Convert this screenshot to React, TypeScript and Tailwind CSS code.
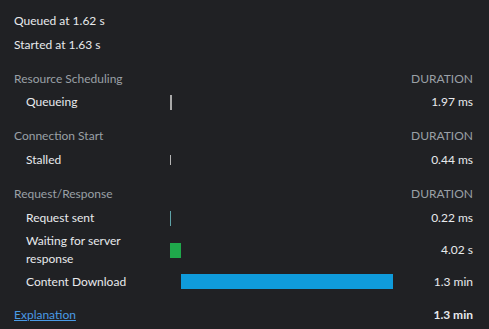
type Phase = {
  label: string[]
  duration: string
  rowClass: string
  bar: { left: number; width: number; height: number; color: string }
}

type Section = {
  title: string
  gap: string
  phases: Phase[]
}

const sections: Section[] = [
  {
    title: 'Resource Scheduling',
    gap: 'mt-[11px]',
    phases: [
      {
        label: ['Queueing'],
        duration: '1.97 ms',
        rowClass: 'h-6',
        bar: { left: 0, width: 2, height: 15, color: '#a9a9a9' },
      },
    ],
  },
  {
    title: 'Connection Start',
    gap: 'mt-[11px]',
    phases: [
      {
        label: ['Stalled'],
        duration: '0.44 ms',
        rowClass: 'h-[25px]',
        bar: { left: 0, width: 1, height: 10, color: '#b5b5b5' },
      },
    ],
  },
  {
    title: 'Request/Response',
    gap: 'mt-[11px]',
    phases: [
      {
        label: ['Request sent'],
        duration: '0.22 ms',
        rowClass: 'h-[26px]',
        bar: { left: 0, width: 1, height: 15, color: '#5fa3a8' },
      },
      {
        label: ['Waiting for server', 'response'],
        duration: '4.02 s',
        rowClass: 'h-[38px]',
        bar: { left: 0, width: 11, height: 15, color: '#1fa84b' },
      },
      {
        label: ['Content Download'],
        duration: '1.3 min',
        rowClass: 'h-[25px]',
        bar: { left: 11, width: 212, height: 15, color: '#0f9bdb' },
      },
    ],
  },
]

function PhaseRow({ phase }: { phase: Phase }) {
  return (
    <div className={`flex items-center ${phase.rowClass}`}>
      <div className="w-[156px] pl-3 leading-[18px] text-[#e8eaed]">
        {phase.label.map((line) => (
          <div key={line}>{line}</div>
        ))}
      </div>
      <div className="w-[223px] h-full flex items-center">
        <div
          style={{
            marginLeft: phase.bar.left,
            width: phase.bar.width,
            height: phase.bar.height,
            backgroundColor: phase.bar.color,
          }}
        />
      </div>
      <div className="flex-1 text-right text-[#e8eaed]">{phase.duration}</div>
    </div>
  )
}

export default function App() {
  return (
    <div
      className="w-[489px] h-[329px] bg-[#202124] pl-[14px] pr-4 pt-[9px] text-[12px] overflow-hidden"
      style={{ fontFamily: 'Lato, "Open Sans", sans-serif' }}
    >
      <div className="h-6 flex items-center text-[#e8eaed]">Queued at 1.62 s</div>
      <div className="h-6 flex items-center text-[#e8eaed]">Started at 1.63 s</div>

      {sections.map((section) => (
        <div key={section.title} className={section.gap}>
          <div className="h-[22px] flex items-center justify-between text-[#9aa0a6]">
            <span>{section.title}</span>
            <span>DURATION</span>
          </div>
          {section.phases.map((phase) => (
            <PhaseRow key={phase.label.join(' ')} phase={phase} />
          ))}
        </div>
      ))}

      <div className="mt-[9px] h-6 flex items-center justify-between">
        <a href="#" className="text-[#4a9be6] underline">
          Explanation
        </a>
        <span className="font-bold text-[#e8eaed]">1.3 min</span>
      </div>
    </div>
  )
}
